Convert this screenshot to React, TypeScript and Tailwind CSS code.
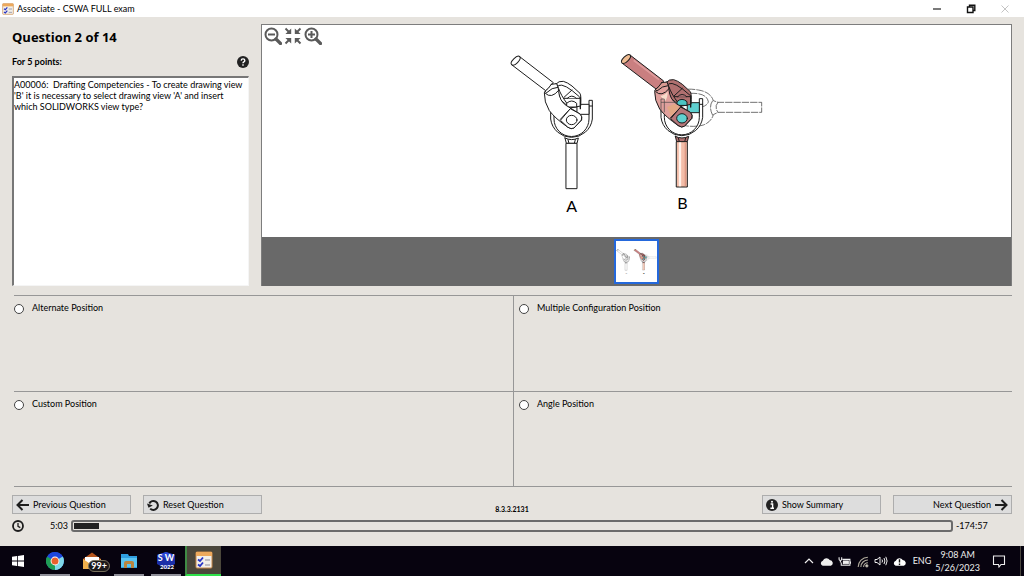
import React, { useState } from 'react';

interface Tones {
  rod: string;
  rodEnd: string;
  collar: string;
  fork: string;
  arm: string;
  boss: string;
  pin: string;
  stem: string;
  face: string;
}

const plain: Tones = {
  rod: '#fff',
  rodEnd: '#fff',
  collar: '#fff',
  fork: '#fff',
  arm: '#fff',
  boss: '#fff',
  pin: '#fff',
  stem: '#fff',
  face: '#fff'
};

const shaded: Tones = {
  rod: '#c97f80',
  rodEnd: '#f0bd92',
  collar: '#d99a92',
  fork: '#e0a09c',
  arm: '#b0706f',
  boss: '#4cc4c4',
  pin: '#5fd0d0',
  stem: '#f3bda8',
  face: '#b5777a'
};

const answers = [
  'Alternate Position',
  'Multiple Configuration Position',
  'Custom Position',
  'Angle Position'
];

const question =
  "A00006:  Drafting Competencies - To create drawing view 'B' it is necessary to select drawing view 'A' and insert which SOLIDWORKS view type?";

const Joint: React.FC<{ tones: Tones }> = ({ tones }) => (
  <g stroke="#1c1c1c" strokeWidth="3" strokeLinejoin="round" strokeLinecap="round">
    {/* Lower yoke and stem */}
    <path d="M182 205 V237 A63 63 0 0 0 307 237 V181 H297 V237 A52 52 0 0 1 192 237 V218" fill="#fff" />
    <path d="M297 198 H307" fill="none" />
    <path d="M225 294 L229 310 H261 L265 294 Q245 304 225 294 Z" fill={tones.arm} />
    <path d="M234 299 L237 310 M256 299 L253 310" fill="none" />
    <rect x="229" y="310" width="32" height="136" fill={tones.stem} />
    {/* Cross pin */}
    <rect x="262" y="193" width="35" height="30" fill={tones.pin} />
    {/* Back arm */}
    <path d="M198 132 Q206 122 220 124 Q232 127 246 138 L270 160 Q274 166 272 198 L240 204 L212 180 Q203 160 198 132 Z" fill={tones.arm} />
    <path d="M206 136 Q222 128 268 170 M222 172 L246 150 M222 175 H270 M206 146 Q212 165 232 192" fill="none" />
    <path d="M232 175 Q245 161 259 175" fill={tones.face} />
    <path d="M230 200 V190 Q245 176 260 190 V200 Z" fill={tones.boss} />
    <path d="M271 172 V206" strokeWidth="4" fill="none" />
    {/* Front arm */}
    <path d="M165 154 L199 131 Q206 137 206 155 Q209 183 228 196 L270 222 Q278 230 275 240 L252 264 Q244 269 234 262 Q196 236 178 212 Q162 186 163 160 Z" fill={tones.fork} />
    <path d="M166 160 Q184 178 206 151 M182 135 Q190 140 200 140 M211 238 L243 204" fill="none" />
    <path d="M212 240 L241 206 L270 222 Q278 230 274 240 L252 264 Q244 269 234 262 Z" fill={tones.face} />
    <ellipse cx="245" cy="240" rx="16" ry="14" fill={tones.pin} />
    {/* Input rod */}
    <path d="M89 50 L190 128 Q182 142 167 152 L66 75 Z" fill={tones.rod} />
    <path d="M184 133 L200 131 L204 142 Q186 142 170 158 L165 154 Q176 146 184 133 Z" fill={tones.collar} />
    <ellipse cx="77" cy="62" rx="17" ry="8" transform="rotate(-45 77 62)" fill={tones.rodEnd} />
  </g>
);

const JointDrawing: React.FC<{ className: string; viewBox: string }> = ({ className, viewBox }) => (
  <svg viewBox={viewBox} className={className} role="img" aria-label="Drawing views A and B">
    <Joint tones={plain} />
    <g fill="none" stroke="#2a2a2a" strokeWidth="2" strokeDasharray="22 3">
      <path d="M570 152 Q590 144 625 150 Q662 156 670 182 L684 187 H815 V217 H684 L670 224 Q664 246 640 255 Q615 262 585 257" />
      <path d="M600 160 Q650 158 655 185 Q652 205 600 203 M684 187 Q672 200 684 217 M668 182 Q655 200 668 226" />
    </g>
    <g transform="translate(331 -5)">
      <Joint tones={shaded} />
      <path d="M239 312 V444" stroke="#fff1ea" strokeWidth="7" />
      <path d="M255 312 V444" stroke="#df9985" strokeWidth="4" />
      <path d="M100 66 L176 124" stroke="#df9c9c" strokeWidth="5" />
      <path d="M180 172 Q192 172 202 160 Q202 180 194 188 Z" fill="#f8dccb" />
      <path d="M200 206 L222 197 L238 206 L212 234 Z" fill="#e2ab7c" opacity="0.7" />
      <path d="M182 192 H228 M182 182 V222 M192 182 V222 M182 182 H192" stroke="#444" strokeWidth="2" fill="none" />
    </g>
    <text x="245" y="516" textAnchor="middle" className="font-['Lato',sans-serif] text-[48px]">A</text>
    <text x="577" y="507" textAnchor="middle" className="font-['Lato',sans-serif] text-[48px]">B</text>
  </svg>
);

const Magnifier: React.FC<{ plus?: boolean }> = ({ plus }) => (
  <svg viewBox="0 0 18 18" className="size-[18px]" fill="none" stroke="#5a5a5a">
    <circle cx="7.5" cy="7.5" r="6" strokeWidth="2" />
    <path d="M12 12 L16.5 16.5" strokeWidth="3.2" strokeLinecap="round" />
    <path d={plus ? 'M4 7.5 H11 M7.5 4 V11' : 'M4 7.5 H11'} strokeWidth="2" />
  </svg>
);

const FitIcon = () => (
  <svg viewBox="0 0 18 18" className="size-[18px]" fill="#5a5a5a" stroke="#5a5a5a" strokeWidth="1.9">
    <path d="M1.5 1.5 L5 5 M16.5 1.5 L13 5 M1.5 16.5 L5 13 M16.5 16.5 L13 13" />
    <path d="M1.4 7 H7.2 V1.4 Z M16.6 7 H10.8 V1.4 Z M1.4 11 H7.2 V16.6 Z M16.6 11 H10.8 V16.6 Z" stroke="none" />
  </svg>
);

const ExamIcon: React.FC<{ className: string }> = ({ className }) => (
  <svg viewBox="0 0 18 18" className={className}>
    <rect x="1" y="1" width="16" height="16" rx="1" fill="#f2efe9" stroke="#c98a4a" strokeWidth="1" />
    <rect x="1" y="1" width="16" height="4" fill="#eda95c" />
    <path d="M3 8.5 L5 10 L8 6.5 M3 13.5 L5 15 L8 11.5" fill="none" stroke="#2733c4" strokeWidth="1.8" />
    <path d="M10 9 H15 M10 14 H15" stroke="#8c8c9c" strokeWidth="1.2" />
  </svg>
);

const toolButton =
  'flex h-[19px] w-[119px] items-center gap-1 border border-[#adadad] bg-[#dddddd] px-[3px] leading-none whitespace-nowrap';
const taskItem = 'relative flex h-full w-9 items-center justify-center';
const running = 'absolute inset-x-[3px] bottom-0 h-[2px] bg-[#8f8f99]';

export default function App() {
  const [selected, setSelected] = useState<number | null>(null);

  return (
    <div className="flex min-h-screen flex-col bg-[#e6e3de] font-['Lato','Noto_Sans',sans-serif] text-[9px] text-black">
      {/* Title bar */}
      <header className="flex h-[17px] items-center bg-white pr-[14px] pl-[2px]">
        <ExamIcon className="size-3" />
        <h1 className="ml-[3px] flex-1 leading-4">Associate - CSWA FULL exam</h1>
        <div className="flex items-center gap-6">
          <button aria-label="Minimize" className="flex size-[10px] items-center">
            <svg viewBox="0 0 10 10" className="size-[10px]"><path d="M1 5 H9" stroke="#222" strokeWidth="1.2" /></svg>
          </button>
          <button aria-label="Restore" className="flex size-[10px] items-center">
            <svg viewBox="0 0 10 10" className="size-[10px]" fill="none" stroke="#111" strokeWidth="1.4">
              <path d="M1.5 3 H7 V8.5 H1.5 Z M3.5 3 V1.2 H8.8 V6.5 H7" />
            </svg>
          </button>
          <button aria-label="Close" className="flex size-[10px] items-center">
            <svg viewBox="0 0 10 10" className="size-[10px]"><path d="M1.5 1.5 L8.5 8.5 M8.5 1.5 L1.5 8.5" stroke="#c4c4c4" strokeWidth="1" /></svg>
          </button>
        </div>
      </header>

      <main className="flex flex-1 flex-col px-3">
        {/* Question and drawing */}
        <section className="flex flex-1 gap-3 pt-[7px]">
          <div className="flex w-[237px] flex-col">
            <h2 className="pt-[3px] font-['Open_Sans',sans-serif] text-[13px] leading-5 font-bold">Question 2 of 14</h2>
            <div className="mt-[7px] flex h-4 items-center justify-between">
              <label htmlFor="question" className="leading-4 font-bold">For 5 points:</label>
              <button aria-label="Help" className="flex">
                <svg viewBox="0 0 12 12" className="size-3">
                  <circle cx="6" cy="6" r="6" fill="#222" />
                  <path d="M4.2 4.6 Q4.3 2.9 6 2.9 Q7.8 2.9 7.8 4.5 Q7.8 5.4 6.8 6 Q6 6.4 6 7.2 M6 8.3 V9.7" fill="none" stroke="#fff" strokeWidth="1.4" />
                </svg>
              </button>
            </div>
            <textarea
              id="question"
              readOnly
              className="mt-[6px] w-full flex-1 resize-none border-t-2 border-r border-b border-l-2 border-t-[#777] border-r-[#f5f5f5] border-b-[#f5f5f5] border-l-[#777] bg-white pt-px text-[9px] leading-[11px] outline-none"
              defaultValue={question}
            />
          </div>

          <div className="flex flex-1 flex-col border-t border-r border-l border-[#7d7d7d] bg-white">
            <div className="relative flex flex-1 items-center justify-center">
              <JointDrawing className="h-[180px] w-[294px]" viewBox="0 3 882 540" />
              <div className="absolute top-[2px] left-[2px] flex gap-[2px]">
                <button aria-label="Zoom out"><Magnifier /></button>
                <button aria-label="Fit to window"><FitIcon /></button>
                <button aria-label="Zoom in"><Magnifier plus /></button>
              </div>
            </div>
            <div className="flex h-[49px] items-center justify-center bg-[#696969]">
              <button aria-label="Show picture 1" className="flex size-[45px] items-center justify-center border-2 border-[#2468dc] bg-white">
                <JointDrawing className="w-[41px]" viewBox="50 40 780 490" />
              </button>
            </div>
          </div>
        </section>

        {/* Answers */}
        <fieldset className="mt-[9px] ml-[2px] grid grid-cols-2 grid-rows-[96px_95px] border-b border-[#979797]">
          {answers.map((answer, index) => (
            <label
              key={answer}
              className="flex items-start gap-2 border-t border-[#979797] pt-[6px] even:border-l even:pl-[5px]"
            >
              <input
                type="radio"
                name="answer"
                checked={selected === index}
                onChange={() => setSelected(index)}
                className="mt-[2px] size-[10px] appearance-none rounded-full border border-[#444] bg-white checked:border-[3px]"
              />
              <span className="leading-3">{answer}</span>
            </label>
          ))}
        </fieldset>

        {/* Actions */}
        <div className="mt-2 flex items-center gap-3">
          <button className={toolButton}>
            <svg viewBox="0 0 13 12" className="h-3 w-[13px]" fill="none" stroke="#1d1d1d" strokeWidth="2">
              <path d="M1.5 6 H13 M6.5 1 L1.5 6 L6.5 11" />
            </svg>
            <span>Previous Question</span>
          </button>
          <button className={toolButton}>
            <svg viewBox="0 0 12 12" className="size-3" fill="none" stroke="#1d1d1d" strokeWidth="2">
              <path d="M3.2 9.6 A4.5 4.5 0 1 0 2.3 4.5" />
              <path d="M0 4.5 L5.8 6.5 L1.5 8.8 Z" fill="#1d1d1d" stroke="none" />
            </svg>
            <span>Reset Question</span>
          </button>
          <p className="flex-1 pt-2 text-center text-[7px] leading-[10px] font-bold">8.3.3.2131</p>
          <button className={toolButton}>
            <svg viewBox="0 0 12 12" className="size-3">
              <circle cx="6" cy="6" r="6" fill="#222" />
              <path d="M4.6 5 H6.6 V9.2 M4.4 9.3 H8" fill="none" stroke="#fff" strokeWidth="1.4" />
              <circle cx="6" cy="2.8" r="1" fill="#fff" />
            </svg>
            <span>Show Summary</span>
          </button>
          <button className={`${toolButton} justify-end`}>
            <span>Next Question</span>
            <svg viewBox="0 0 13 12" className="h-3 w-[13px]" fill="none" stroke="#1d1d1d" strokeWidth="2">
              <path d="M0 6 H11.5 M6.5 1 L11.5 6 L6.5 11" />
            </svg>
          </button>
        </div>

        {/* Timer */}
        <div className="mt-[5px] mb-[13px] flex h-[14px] items-center">
          <svg viewBox="0 0 12 12" className="size-3" fill="none" stroke="#1d1d1d" strokeWidth="1.8">
            <circle cx="6" cy="6" r="5" />
            <path d="M6 3 V6.3 L8.3 7.6" strokeWidth="1.3" />
          </svg>
          <span className="w-11 text-right">5:03</span>
          <div className="mx-[3px] h-3 flex-1 rounded-[3px] border-2 border-[#6b6b6b] p-px">
            <div className="h-full bg-[#222]" style={{ width: `${(25 / 876) * 100}%` }} />
          </div>
          <span className="w-14">-174:57</span>
        </div>
      </main>

      {/* Taskbar */}
      <footer className="flex h-[30px] items-center justify-between bg-[#07030f] text-[#eee]">
        <nav className="flex h-full gap-px">
          <button aria-label="Start" className={taskItem}>
            <svg viewBox="0 0 12 12" className="size-3" fill="#fff">
              <path d="M0 1.7 L5 1 V5.6 H0 Z M5.8 0.9 L12 0 V5.6 H5.8 Z M0 6.4 H5 V11 L0 10.3 Z M5.8 6.4 H12 V12 L5.8 11.1 Z" />
            </svg>
          </button>
          <button aria-label="Chrome" className={taskItem}>
            <svg viewBox="0 0 18 18" className="size-[18px]">
              <circle cx="9" cy="9" r="9" fill="#1f62e0" />
              <path d="M9 9 L1.2 4.5 A9 9 0 0 0 9 18 L12 13 Z" fill="#1f9d55" />
              <path d="M9 9 L9 18 A9 9 0 0 0 16.8 4.6 L10 5 Z" fill="#7fd8e8" />
              <path d="M9 9 L1.2 4.5 A9 9 0 0 1 16.8 4.6 Z" fill="#1d47dc" />
              <circle cx="9" cy="9" r="4.4" fill="#fff" />
              <circle cx="9" cy="9" r="3.5" fill="#e8602c" />
            </svg>
            <span className={running} />
          </button>
          <button aria-label="Mail" className={taskItem}>
            <svg viewBox="0 0 20 18" className="h-[18px] w-5">
              <path d="M1 7 L10 0.5 L19 7 V17 H1 Z" fill="#b5561f" />
              <path d="M3 5 H17 V12 H3 Z" fill="#fff" />
              <path d="M1 7 L10 13 L19 7 V17 H1 Z" fill="#f0b04c" />
            </svg>
            <span className="absolute right-0 bottom-1 rounded-full border border-[#77705c] bg-[#1c1a1a] px-[2px] text-[9px] leading-[10px] font-bold text-white">99+</span>
          </button>
          <button aria-label="File Explorer" className={taskItem}>
            <svg viewBox="0 0 18 16" className="h-4 w-[18px]">
              <path d="M1 1 H8 L9 3 H17 V15 H1 Z" fill="#2f9fe0" />
              <path d="M1 5 H17 V14 H1 Z" fill="#58c4f2" />
              <path d="M4 15 V10 Q4 8 6 8 H12 Q14 8 14 10 V15 H11 V11 H7 V15 Z" fill="#b98540" />
            </svg>
            <span className={running} />
          </button>
          <button aria-label="SolidWorks" className={taskItem}>
            <svg viewBox="0 0 20 20" className="size-5">
              <path d="M1 4 L10 1 L19 4 V13 L10 18 L1 13 Z" fill="#1b2fa8" />
              <path d="M1 4 L10 7 L19 4 L10 1 Z" fill="#2947d4" />
              <text x="10" y="10" textAnchor="middle" className="text-[9px] font-bold" fill="#fff">S W</text>
              <text x="11" y="18" textAnchor="middle" className="text-[6px] font-bold" fill="#fff">2022</text>
            </svg>
            <span className={running} />
          </button>
          <button aria-label="Exam" className={`${taskItem} border-b-2 border-l-2 border-b-[#2ee04a] border-l-[#3f8a45] bg-[#4b473b]`}>
            <ExamIcon className="size-[18px]" />
          </button>
        </nav>

        <div className="flex h-full items-center">
          <div className="flex items-center gap-[5px]">
            <svg viewBox="0 0 12 12" className="size-3" fill="none" stroke="#eee" strokeWidth="1.2"><path d="M2 8 L6 4 L10 8" /></svg>
            <svg viewBox="0 0 12 12" className="size-[13px]"><path d="M2.5 10 A2.5 2.5 0 0 1 2.6 5.2 A3.6 3.6 0 0 1 9 4.6 A2.8 2.8 0 0 1 10 10 Z" fill="#eee" /></svg>
            <svg viewBox="0 0 12 12" className="size-[13px]" fill="none" stroke="#eee">
              <path d="M4 4 H11 V9.5 H3 V7 M11.5 6 V8" />
              <path d="M5 5.5 H9.5 V8 H5 Z" fill="#eee" />
              <path d="M1 2 V4 Q1 5 2.2 5 Q3.4 5 3.4 4 V2 M2.2 5 V7" />
            </svg>
            <svg viewBox="0 0 12 12" className="size-[13px]" fill="none" stroke="#b3ae9f" strokeWidth="1">
              <path d="M2 11 A9 9 0 0 1 11 2 M4.5 11 A6.5 6.5 0 0 1 11 4.6 M7 11 A4 4 0 0 1 11 7.2" />
              <circle cx="10" cy="10" r="1" fill="#eee" />
            </svg>
            <svg viewBox="0 0 14 12" className="h-3 w-[14px]" fill="none" stroke="#eee" strokeWidth="1">
              <path d="M1 4.5 H3 L6 2 V10 L3 7.5 H1 Z M8 4.5 Q9 6 8 7.5 M10 3 Q11.8 6 10 9 M11.8 1.8 Q14.4 6 11.8 10.2" />
            </svg>
            <svg viewBox="0 0 12 12" className="size-[13px]">
              <path d="M2.5 10 A2.5 2.5 0 0 1 2.6 5.2 A3.6 3.6 0 0 1 9 4.6 A2.8 2.8 0 0 1 10 10 Z" fill="#fff" />
              <path d="M6 4 V7 M6 7.8 V9.2" stroke="#111" strokeWidth="1.3" />
            </svg>
          </div>
          <span className="ml-[7px]">ENG</span>
          <time dateTime="2023-05-26T09:08" className="ml-1 text-center leading-[13px]">
            9:08 AM<br />5/26/2023
          </time>
          <button aria-label="Notifications" className="ml-3 flex">
            <svg viewBox="0 0 14 14" className="size-[14px]" fill="none" stroke="#eee" strokeWidth="1.1">
              <path d="M1.5 2 H12.5 V10.5 H9 L7 13 L6.5 10.5 H1.5 Z" />
            </svg>
          </button>
          <span className="mr-[3px] ml-[14px] h-full w-px bg-[#4a463f]" />
        </div>
      </footer>
    </div>
  );
}
